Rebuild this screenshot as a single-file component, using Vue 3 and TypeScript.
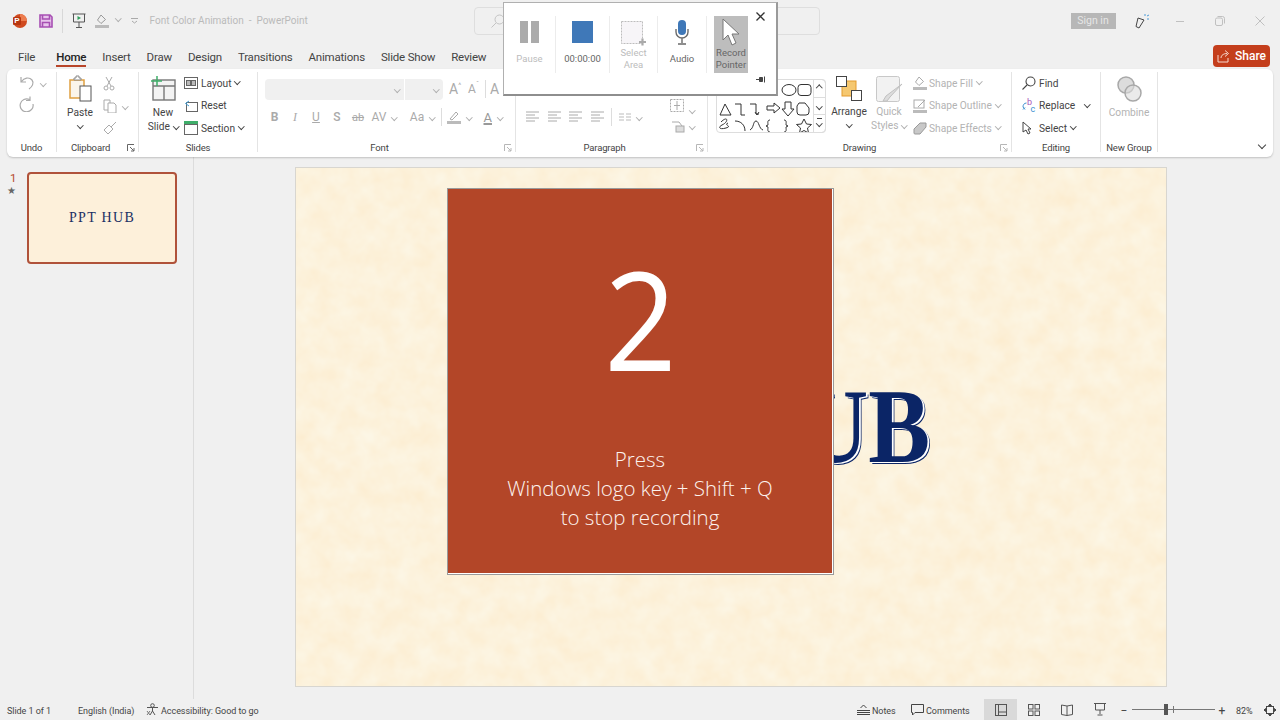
<script setup lang="ts">
interface Cell { t?: string; w: number; c?: string }
const fontRow: Cell[] = [
  { t: 'B', w: 21, c: 'fb' }, { t: 'I', w: 20, c: 'fi' }, { t: 'U', w: 22, c: 'fu' }, { t: 'S', w: 20, c: 'fs' },
  { t: 'ab', w: 22, c: 'fab' }, { t: 'AV', w: 20, c: 'fav' }, { w: 10, c: 'chevcell' }, { w: 8 }, { t: 'Aa', w: 20, c: 'faa' },
  { w: 10, c: 'chevcell' }
]
const tabs = ['File', 'Home', 'Insert', 'Draw', 'Design', 'Transitions', 'Animations', 'Slide Show', 'Review']
</script>

<template>
  <div class="app">
    <header class="titlebar">
      <svg class="ic logo" width="16" height="16" viewBox="0 0 16 16"><circle cx="8" cy="8" r="7" fill="#d04a1f"/><path d="M8 1a7 7 0 0 1 7 7H8z" fill="#ed7d4f"/><rect x="1" y="4" width="8" height="8" rx="1" fill="#b7360f"/><text x="5" y="10.4" text-anchor="middle" class="plogo">P</text></svg>
      <svg class="ic save" width="14" height="14" viewBox="0 0 14 14" fill="none" stroke="#a74fb3" stroke-width="1.6"><path d="M1 1h10l2 2v10H1z" fill="#e8c5ec"/><path d="M3.5 1v4h7V1M3.5 13V8.5h7V13"/></svg>
      <i class="qsep"></i>
      <svg class="ic pres" width="14" height="16" viewBox="0 0 14 16" fill="none" stroke="#555"><path d="M.5 1h13M1.5 1v8h11V1M7 9v5M4 14.500h6"/><path d="M5.500 3l3.500 2-3.500 2z" fill="#2e9e5b" stroke="none"/></svg>
      <svg class="ic fill" width="14" height="14" viewBox="0 0 14 14" fill="none" stroke="#999"><path d="M6 1l4.500 4.500L6 9.500 2.500 6z"/><rect x="0" y="11" width="14" height="3" fill="#bbb" stroke="none"/></svg>
      <span class="chev grey qchev"></span>
      <svg class="ic qat" width="7" height="6" viewBox="0 0 7 6" fill="none" stroke="#aaa"><path d="M0 .5h7M1 3l2.500 2L6 3"/></svg>
      <span class="doc">Font Color Animation&nbsp; -&nbsp; PowerPoint</span>
      <div class="search">
        <svg class="sicon" width="14" height="14" viewBox="0 0 14 14" fill="none" stroke="#c4c4c4"><circle cx="8.500" cy="5.500" r="4.500"/><path d="M5 9l-4.500 4.500"/></svg>
      </div>
      <span class="signin">Sign in</span>
      <svg class="ic pen" width="16" height="16" viewBox="0 0 16 16" fill="none" stroke="#444"><path d="M4 5l6 2-5 8-3-1.500z"/><path d="M11 1v2M13 3l2-1M13 6h2" stroke="#4f9cd6"/></svg>
      <span class="winbtns">
        <svg width="10" height="10" viewBox="0 0 10 10" stroke="#c0c0c0" fill="none"><path d="M1 5.500h8"/></svg>
        <svg width="10" height="10" viewBox="0 0 10 10" stroke="#c0c0c0" fill="none"><rect x=".5" y="2" width="7" height="7.500" rx="1.500"/><path d="M2.500 .5h5a2 2 0 0 1 2 2v5"/></svg>
        <svg width="10" height="10" viewBox="0 0 10 10" stroke="#c0c0c0" fill="none"><path d="M.5 .5l9 9M9.500 .5l-9 9"/></svg>
      </span>
    </header>

    <nav class="tabs">
      <span v-for="t in tabs" :key="t" class="tab" :class="{ active: t === 'Home', file: t === 'File' }">{{ t }}</span>
      <button class="share">
        <svg width="14" height="13" viewBox="0 0 14 13" fill="none" stroke="#f7d9cf"><path d="M1 5v7h10V8M4 8c0-3 3-4.500 6-4.500M8 .5l3.500 3L8 6.500"/></svg>
        Share
      </button>
    </nav>

    <section class="ribbon">
      <div class="grp g-undo">
        <div class="body col">
          <div class="row"><svg class="ml12" width="16" height="16" viewBox="0 0 16 16" fill="none" stroke="#aaa" stroke-width="1.200"><path d="M2 2v5h5M2.500 6.500C5 3 10 1.500 13 5c2.500 3 0 7-3 9"/></svg><span class="chev grey ml5"></span></div>
          <div class="row up2"><svg class="ml11" width="17" height="17" viewBox="0 0 17 17" fill="none" stroke="#aaa" stroke-width="1.200"><path d="M12 1.500v4H8M11.500 4.500A6.500 6.500 0 1 0 15 9"/></svg></div>
        </div>
        <div class="lab">Undo</div>
      </div>

      <div class="grp g-clip">
        <div class="body flexrow">
          <div class="big paste">
            <svg width="24" height="28" viewBox="0 0 24 28" fill="none"><path d="M2 5h14v18H2z" fill="#fbf5ea" stroke="#e0a040" stroke-width="1.500"/><path d="M6 5V3h2V1h3v2h2v2z" fill="#fff" stroke="#888"/><rect x="12" y="11" width="11" height="15" fill="#fff" stroke="#555"/></svg>
            <span class="bl">Paste</span>
            <span class="chev dark"></span>
          </div>
          <div class="stack clipicons">
            <div class="row"><svg width="12" height="15" viewBox="0 0 12 15" fill="none" stroke="#aaa"><path d="M3 1l5 9M9 1L4 10"/><circle cx="3" cy="12" r="2"/><circle cx="9" cy="12" r="2"/></svg></div>
            <div class="row"><svg width="14" height="14" viewBox="0 0 14 14" fill="none" stroke="#aaa"><path d="M1 1h6v10H1z"/><path d="M5 4h6l2 2v8H5z" fill="#fff"/></svg><span class="chev grey ml5"></span></div>
            <div class="row"><svg width="14" height="14" viewBox="0 0 14 14" fill="none" stroke="#aaa"><path d="M1 9l5-5 4 4-5 5zM8 6l5-5"/></svg></div>
          </div>
        </div>
        <div class="lab shifted">Clipboard</div>
        <svg class="launch" width="8" height="8" viewBox="0 0 8 8" fill="none" stroke="#666"><path d="M.5 7V.5H7M3 3l4 4M7 4v3H4"/></svg>
      </div>

      <div class="grp g-slides">
        <div class="body flexrow">
          <div class="big newslide">
            <svg width="26" height="25" viewBox="0 0 26 25" fill="none"><rect x="3" y="4" width="22" height="20" fill="#f3f3f3" stroke="#777" stroke-width="1.400"/><path d="M3 10h22M14 10v14" stroke="#777" stroke-width="1.400"/><path d="M7 0v10M1 5h11" stroke="#3fae6a" stroke-width="1.500"/></svg>
            <span class="bl">New</span>
            <span class="bl">Slide<span class="chev dark ml3 up"></span></span>
          </div>
          <div class="stack">
            <div class="row"><svg width="14" height="12" viewBox="0 0 14 12" fill="none" stroke="#666"><rect x=".5" y=".5" width="13" height="11"/><rect x="2.500" y="3.500" width="4" height="5" fill="#bbb"/><rect x="7.500" y="3.500" width="4" height="5" fill="#bbb"/></svg><span class="tx">Layout</span><span class="chev dark ml3 up"></span></div>
            <div class="row"><svg width="14" height="12" viewBox="0 0 14 12" fill="none" stroke="#666"><rect x="2.500" y="2.500" width="11" height="9"/><path d="M5 1L1.500 3.500 5 6" stroke="#3c9cd6"/></svg><span class="tx">Reset</span></div>
            <div class="row"><svg width="14" height="14" viewBox="0 0 14 14" fill="none" stroke="#666"><rect x=".5" y="3.500" width="13" height="10"/><path d="M0 1.500h14" stroke="#3fae6a" stroke-width="3"/></svg><span class="tx">Section</span><span class="chev dark ml3 up"></span></div>
          </div>
        </div>
        <div class="lab">Slides</div>
      </div>

      <div class="grp g-font">
        <div class="body">
          <div class="row fr1">
            <span class="combo c1"><span class="chev grey"></span></span>
            <span class="combo c2"><span class="chev grey"></span></span>
            <span class="aa a1">A<sup>^</sup></span>
            <span class="aa a2">A<sup>ˇ</sup></span>
            <i class="vs"></i>
            <span class="aa a3">A</span>
          </div>
          <div class="row fr2">
            <span v-for="(c, i) in fontRow" :key="i" class="cell" :class="c.c" :style="{ width: c.w + 'px' }"><template v-if="c.t">{{ c.t }}</template><span v-else-if="c.c" class="chev grey"></span></span>
            <i class="vs2"></i>
            <svg class="hl" width="14" height="14" viewBox="0 0 14 14" fill="none" stroke="#aaa"><path d="M3 9l6-7 2 2-6 6z"/><rect y="11" width="14" height="3" fill="#bbb" stroke="none"/></svg>
            <span class="chev grey ml5"></span>
            <span class="ac">A</span>
            <span class="chev grey ml5"></span>
          </div>
        </div>
        <div class="lab shifted">Font</div>
        <svg class="launch faded" width="8" height="8" viewBox="0 0 8 8" fill="none" stroke="#999"><path d="M.5 7V.5H7M3 3l4 4M7 4v3H4"/></svg>
      </div>

      <div class="grp g-para">
        <div class="body">
          <div class="row pr1">
            <svg width="14" height="13" viewBox="0 0 14 13" fill="none" stroke="#aaa" stroke-dasharray="2 1"><path d="M.5 .5h13v12H.5z"/><path d="M7 2v9M4 6.500h6" stroke-dasharray="none"/></svg><span class="chev grey ml5"></span>
          </div>
          <div class="row pr2">
            <svg v-for="n in 4" :key="n" class="al" width="13" height="12" viewBox="0 0 13 12" stroke="#aaa"><path d="M0 1h13M0 4h9M0 7h13M0 10h9"/></svg>
            <i class="vs3"></i>
            <svg width="12" height="8" viewBox="0 0 12 8" stroke="#bbb"><path d="M0 1h5M7 1h5M0 4h5M7 4h5M0 7h5M7 7h5"/></svg><span class="chev grey ml5"></span>
            <svg class="smart" width="14" height="12" viewBox="0 0 14 12" fill="none" stroke="#aaa"><path d="M1 1h7l3 4"/><rect x="5" y="5" width="8" height="6" fill="#ddd"/></svg><span class="chev grey smartchev"></span>
          </div>
        </div>
        <div class="lab shifted">Paragraph</div>
        <svg class="launch faded" width="8" height="8" viewBox="0 0 8 8" fill="none" stroke="#999"><path d="M.5 7V.5H7M3 3l4 4M7 4v3H4"/></svg>
      </div>

      <div class="grp g-draw">
        <div class="body flexrow">
          <div class="gallery">
            <svg width="96" height="52" viewBox="0 0 96 52" fill="none" stroke="#333"><ellipse cx="72" cy="10" rx="7" ry="5.500"/><rect x="81" y="4.500" width="13" height="11" rx="3"/><path d="M3 35l5-11 6 11zM18 24h6v11h4M33 24h6v10h3M38 32l2 3 2-3M50 26h7v-3l6 5-6 5v-3h-7zM68 22h6v7h3l-6 7-6-7h3zM82 23h6l4 5v4a3 3 0 0 1-3 3h-6a3 3 0 0 1-3-3v-6z"/><path d="M4 42c7-7 8 0 1 3-4 2-3 5 4 3s-3-3 2-5M18 41c6 0 10 4 10 10M33 50c4-2 3-9 6-9s3 8 7 9M53 40c-3 0-2 3-2 5l-2 1 2 1c0 2-1 5 2 5M67 40c3 0 2 3 2 5l2 1-2 1c0 2 1 5-2 5M87 39l2.500 5 5 .5-4 3.500 1 5-4.500-2.500-4.500 2.500 1-5-4-3.500 5-.5z"/></svg>
            <div class="gscroll">
              <span><i class="chev dark flip"></i></span>
              <span><i class="chev dark"></i></span>
              <span class="more"><i class="chev dark"></i></span>
            </div>
          </div>
          <div class="big arrange">
            <svg width="26" height="25" viewBox="0 0 26 25"><rect x="6" y="5" width="14" height="15" fill="#f5c871" stroke="#e49b2e"/><rect x=".5" y=".5" width="10" height="10" fill="#fff" stroke="#444"/><rect x="15.500" y="14.500" width="10" height="10" fill="#fff" stroke="#444"/></svg>
            <span class="bl">Arrange</span>
            <span class="chev dark"></span>
          </div>
          <div class="big quick">
            <svg width="27" height="27" viewBox="0 0 27 27" fill="none"><rect x=".5" y=".5" width="23" height="25" rx="2" fill="#f2f2f2" stroke="#c8c8c8"/><path d="M26 8L14 21l-3 4-4 0 3-5z" fill="#ddd" stroke="#c0c0c0"/></svg>
            <span class="bl gy">Quick</span>
            <span class="bl gy">Styles<span class="chev grey ml3 up"></span></span>
          </div>
          <div class="stack shapes">
            <div class="row"><svg width="14" height="14" viewBox="0 0 14 14" fill="none" stroke="#aaa"><path d="M6 1l4.500 4.500L6 9.500 2.500 6z"/><rect y="11" width="14" height="3" fill="#bbb" stroke="none"/></svg><span class="tx gy">Shape Fill</span><span class="chev grey ml3 up"></span></div>
            <div class="row"><svg width="14" height="14" viewBox="0 0 14 14" fill="none" stroke="#aaa"><rect x="1" y="1" width="10" height="8"/><path d="M5 8l7-7"/><rect y="11" width="14" height="3" fill="#bbb" stroke="none"/></svg><span class="tx gy">Shape Outline</span><span class="chev grey ml3 up"></span></div>
            <div class="row"><svg width="14" height="13" viewBox="0 0 14 13" fill="#c8c8c8" stroke="#999"><path d="M1 7l6-6h6v4l-6 7H2a1 1 0 0 1-1-1z"/></svg><span class="tx gy">Shape Effects</span><span class="chev grey ml3 up"></span></div>
          </div>
        </div>
        <div class="lab">Drawing</div>
        <svg class="launch faded" width="8" height="8" viewBox="0 0 8 8" fill="none" stroke="#999"><path d="M.5 7V.5H7M3 3l4 4M7 4v3H4"/></svg>
      </div>

      <div class="grp g-edit">
        <div class="body stack">
          <div class="row"><svg width="14" height="14" viewBox="0 0 14 14" fill="none" stroke="#444" stroke-width="1.100"><circle cx="8.500" cy="5.500" r="4.500"/><path d="M5 9l-4.500 4.500"/></svg><span class="tx">Find</span></div>
          <div class="row"><svg width="14" height="15" viewBox="0 0 14 15" fill="none"><text x="5" y="7" class="rb">b</text><text x="8.500" y="14" class="rc">c</text><path d="M4.500 5C2 5 1 7 1 9l2 2.500M1 11.500l2-2" stroke="#3c8fd0"/></svg><span class="tx">Replace</span><span class="chev dark repl"></span></div>
          <div class="row"><svg width="12" height="14" viewBox="0 0 12 14" fill="#fff" stroke="#444"><path d="M1 1v10l3-2 2 4 2-1-2-4h3z"/></svg><span class="tx sel">Select</span><span class="chev dark ml3 up"></span></div>
        </div>
        <div class="lab">Editing</div>
      </div>

      <div class="grp g-new">
        <div class="body">
          <div class="big combine">
            <svg width="25" height="26" viewBox="0 0 25 26" fill="#dcdcdc" stroke="#a8a8a8" stroke-width="1.500"><circle cx="9" cy="9" r="8"/><circle cx="16" cy="17" r="8" fill-opacity=".6"/></svg>
            <span class="bl gy">Combine</span>
          </div>
        </div>
        <div class="lab">New Group</div>
      </div>
      <span class="chev collapse"></span>
    </section>

    <main class="main">
      <aside class="thumbs">
        <div class="num"><span>1</span><b>★</b></div>
        <div class="thumb"><span class="serif">PPT HUB</span></div>
      </aside>
      <div class="canvas">
        <div class="slide">
          <svg class="paper" width="100%" height="100%">
            <filter id="parch" color-interpolation-filters="sRGB" x="0" y="0" width="100%" height="100%">
              <feTurbulence type="fractalNoise" baseFrequency="0.05" numOctaves="3" seed="7"/>
              <feColorMatrix type="matrix" values="0 0 0 0 0.99  0.045 0 0 0 0.925  0.1 0 0 0 0.81  0 0 0 0 1"/>
            </filter>
            <rect width="100%" height="100%" filter="url(#parch)"/>
          </svg>
          <span class="bigtitle">PPT HUB</span>
          <div class="count">
            <div class="digit">2</div>
            <p>Press<br>Windows logo key + Shift + Q<br>to stop recording</p>
          </div>
        </div>
      </div>
    </main>

    <footer class="status">
      <span class="s1">Slide 1 of 1</span>
      <span class="s2">English (India)</span>
      <svg class="s3" width="13" height="13" viewBox="0 0 13 13" fill="none" stroke="#555"><circle cx="6.500" cy="2.500" r="1.800"/><path d="M1 4.500h11M6.500 5v3M4 12l2.500-4L9 12"/><path d="M1 8l3 4M4 8l-3 4" stroke="#777"/></svg>
      <span class="s4">Accessibility: Good to go</span>
      <span class="spacer"></span>
      <svg width="13" height="11" viewBox="0 0 13 11" fill="none" stroke="#444"><path d="M0 6.500h13M0 8.500h13M0 10.500h13M3.500 4l3-3 3 3"/></svg>
      <span class="s5">Notes</span>
      <svg class="cm" width="13" height="13" viewBox="0 0 13 13" fill="none" stroke="#444"><path d="M.5 1.500h12v8H4l-2.500 2.500v-2.500h-1z"/></svg>
      <span class="s6">Comments</span>
      <span class="view on"><svg width="12" height="12" viewBox="0 0 12 12" fill="none" stroke="#555"><rect x=".5" y=".5" width="11" height="11"/><path d="M3.500 1v10M3.500 8h8"/></svg></span>
      <span class="view"><svg width="12" height="12" viewBox="0 0 12 12" fill="none" stroke="#555"><rect x=".5" y=".5" width="4.500" height="4.500"/><rect x="7" y=".5" width="4.500" height="4.500"/><rect x=".5" y="7" width="4.500" height="4.500"/><rect x="7" y="7" width="4.500" height="4.500"/></svg></span>
      <span class="view"><svg width="12" height="12" viewBox="0 0 12 12" fill="none" stroke="#555"><path d="M6 2L.5 1v9.500L6 11.500l5.500-1V1zM6 2v9.500"/></svg></span>
      <span class="view"><svg width="12" height="13" viewBox="0 0 12 13" fill="none" stroke="#555"><path d="M0 .5h12M1.500 1v6h9V1M6 7v4M3.500 12h5"/></svg></span>
      <span class="minus">−</span>
      <span class="slider"><i class="tick"></i><i class="thumbk"></i></span>
      <span class="plus">+</span>
      <span class="pct">82%</span>
      <svg class="fit" width="12" height="12" viewBox="0 0 12 12" fill="none" stroke="#444"><rect x="2.500" y="2.500" width="7" height="7"/><path d="M6 0l-1.500 1.500h3zM6 12l-1.500-1.500h3zM0 6l1.500-1.500v3zM12 6l-1.500-1.500v3z" fill="#444"/></svg>
    </footer>

    <div class="rec">
      <div class="ritem r-pause">
        <div class="rico bars"><i></i><i></i></div>
        <span class="rl light one">Pause</span>
      </div>
      <div class="ritem r-stop">
        <div class="rico"><i class="stop"></i></div>
        <span class="rl one">00:00:00</span>
      </div>
      <div class="ritem r-area">
        <svg class="rsvg" width="25" height="25" viewBox="0 0 25 25" fill="#f7f5f8"><rect x=".5" y=".5" width="21" height="22" stroke="#bdbdbd" stroke-dasharray="2 1"/><path d="M18 21h7M21.500 17.500v7" stroke="#aaa" stroke-width="2.200"/></svg>
        <span class="rl light">Select<br>Area</span>
      </div>
      <div class="ritem r-audio">
        <svg class="rsvg" width="14" height="25" viewBox="0 0 14 25" fill="none"><rect x="3" y="0" width="8" height="15" rx="4" fill="#3f78b8"/><path d="M1 9v3a6 6 0 0 0 12 0V9M7 18v5M3 24h8" stroke="#6a6a6a" stroke-width="1.400"/></svg>
        <span class="rl one">Audio</span>
      </div>
      <div class="ritem r-point">
        <svg class="rsvg cur" width="18" height="30" viewBox="0 0 18 30" fill="#fff" stroke="#777"><path d="M1 1v21l5-5 4 10 4-2-4-9h7z"/></svg>
        <span class="rl pt">Record<br>Pointer</span>
      </div>
      <svg class="rx" width="9" height="9" viewBox="0 0 9 9" stroke="#333" stroke-width="1.300"><path d="M.5 .5l8 8M8.500 .5l-8 8"/></svg>
      <svg class="rpin" width="9" height="7" viewBox="0 0 9 7" fill="#444" stroke="#444"><path d="M0 3.500h3M3.500 1.500h3v4h-3zM8.500 .5v6" /></svg>
    </div>
  </div>
</template>

<style>
html, body { margin: 0; background: #f0f0f0; }
</style>

<style scoped>
.app {
  position: relative; width: 1280px; height: 720px; overflow: hidden;
  display: flex; flex-direction: column; background: #f0f0f0;
  font-family: Roboto, "Liberation Sans", sans-serif; font-size: 11px; color: #444;
}
svg { display: block; flex: none; }
.chev { display: inline-block; width: 3.500px; height: 3.500px; border-right: 1px solid #555; border-bottom: 1px solid #555; transform: rotate(45deg); flex: none; }
.chev.grey { border-color: #b0b0b0; }
.chev.dark { border-color: #444; }
.chev.flip { transform: rotate(225deg); }
.chev.up { position: relative; top: -2px; }
.ml3 { margin-left: 4px; } .ml5 { margin-left: 6px; } .ml11 { margin-left: 11px; } .ml12 { margin-left: 12px; }
.up2 { position: relative; top: -2px; }

.titlebar { height: 41px; flex: none; display: flex; align-items: center; position: relative; }
.logo { margin-left: 12px; }
.save { margin-left: 11px; }
.qsep { width: 1px; height: 24px; background: #d8d8d8; margin-left: 9px; }
.pres { margin-left: 9px; }
.fill { margin-left: 9px; }
.qchev { margin-left: 7px; position: relative; top: -2px; }
.qat { margin-left: 10px; }
.doc { margin-left: 12px; width: 324px; font-size: 10px; color: #bababa; white-space: nowrap; }
.plogo { font: 700 8px "Liberation Sans", sans-serif; fill: #fff; }
.rb { font: 9px Roboto, sans-serif; fill: #a857b8; }
.rc { font: 9px Roboto, sans-serif; fill: #3c8fd0; }
.search { width: 346px; height: 28px; box-sizing: border-box; border: 1px solid #dedede; border-radius: 4px; padding: 6px 0 0 16px; }
.signin { margin-left: 251px; width: 45px; height: 16px; line-height: 16px; text-align: center; background: #b7b7b7; color: #e6e6e6; font-size: 10.500px; }
.pen { margin-left: 18px; }
.winbtns { margin-left: 25px; display: flex; gap: 30px; }

.tabs { height: 28px; flex: none; display: flex; align-items: flex-start; padding-left: 18px; position: relative; }
.tab { margin-right: 16px; font-size: 11.500px; letter-spacing: -.2px; line-height: 32px; height: 28px; position: relative; white-space: nowrap; }
.tab.file { margin-right: 21px; }
.tab.active { color: #222; font-weight: 500; }
.tab.active::after { content: ""; position: absolute; left: 0; right: 0; bottom: 2px; height: 2px; background: #b8452a; }
.share { position: absolute; left: 1213px; top: 4px; width: 57px; height: 22px; padding: 0; border: 0; border-radius: 4px; background: #c43e1c; color: #fff; font: 500 12px Roboto, sans-serif; display: flex; align-items: center; justify-content: center; gap: 4px; }

.ribbon { position: relative; margin: 0 7px; height: 88px; flex: none; box-sizing: border-box; padding-top: 3px; background: #fff; border-radius: 6px; box-shadow: 0 1px 2px rgba(0,0,0,.2); display: flex; align-items: flex-start; }
.grp { position: relative; height: 80px; box-sizing: border-box; border-right: 1px solid #e4e4e4; flex: none; }
.lab { position: absolute; left: 0; right: 0; top: 68px; text-align: center; font-size: 9.500px; letter-spacing: -.15px; line-height: 16px; color: #444; white-space: nowrap; }
.lab.shifted { right: 14px; }
.launch { position: absolute; right: 3px; top: 72px; }
.launch.faded { opacity: .7; }
.g-undo { width: 50px; } .g-clip { width: 82px; } .g-slides { width: 119px; } .g-font { width: 258px; }
.g-para { width: 192px; } .g-draw { width: 304px; } .g-edit { width: 89px; } .g-new { width: 57px; }
.body { height: 68px; }
.flexrow { display: flex; }
.row { height: 22.500px; display: flex; align-items: center; white-space: nowrap; }
.stack { display: flex; flex-direction: column; }
.tx { margin-left: 3px; font-size: 10.200px; }
.gy { color: #b3b3b3; }
.big { display: flex; flex-direction: column; align-items: center; }
.bl { font-size: 10.200px; line-height: 14px; white-space: nowrap; }

.paste { width: 34px; margin-left: 6px; padding-top: 3px; }
.paste .bl { margin-top: 3px; }
.paste .chev { margin-top: 3px; }
.clipicons { margin-left: 6px; }
.newslide { width: 34px; margin-left: 7px; padding-top: 4px; }
.newslide svg { margin-bottom: 5px; }
.newslide + .stack { margin-left: 4px; }

.fr1 { padding-left: 7px; height: 34px; align-items: center; }
.combo { height: 21px; background: #f0f0f0; display: flex; align-items: center; justify-content: flex-end; padding-right: 5px; box-sizing: border-box; flex: none; }
.c1 { width: 139px; border-radius: 4px 0 0 4px; }
.c2 { width: 38px; margin-left: 1px; border-radius: 0 4px 4px 0; }
.aa { color: #aaa; }
.aa sup { font-size: 7px; vertical-align: 6px; line-height: 0; }
.a1 { margin-left: 6px; font-size: 14px; }
.a2 { margin-left: 7px; font-size: 12px; }
.a3 { margin-left: 4px; font-size: 14px; }
.vs { width: 1px; height: 18px; background: #ddd; margin-left: 6px; }
.fr2 { padding-left: 6px; height: 22px; }
.cell { display: flex; justify-content: center; align-items: center; color: #aaa; font-size: 12px; height: 20px; }
.fb { font-weight: 700; } .fi { font-style: italic; font-family: "Liberation Serif", serif; } .fu { text-decoration: underline; } .fs { font-weight: 500; }
.fab { text-decoration: line-through; font-size: 11px; }
.vs2 { width: 1px; height: 18px; background: #ddd; margin-left: 4px; }
.hl { margin-left: 5px; }
.ac { margin-left: 12px; color: #999; font-size: 13px; text-decoration: underline; text-decoration-thickness: 2px; }

.pr1 { padding-left: 154px; height: 40px; margin-bottom: -6px; align-items: flex-end; box-sizing: border-box; }
.pr2 { padding-left: 10px; height: 22px; position: relative; }
.al { margin-right: 8.500px; }
.vs3 { width: 1px; height: 18px; background: #ddd; margin: 0 7px 0 -1px; }
.smart { position: absolute; left: 155px; top: 15px; }
.smartchev { position: absolute; left: 174px; top: 18px; }

.gallery { position: relative; width: 110px; height: 54px; margin: 7px 0 0 8px; box-sizing: border-box; border: 1px solid #ddd; border-radius: 4px; display: flex; background: #fff; flex: none; }
.gscroll { position: absolute; right: -1px; top: -1px; bottom: -1px; width: 13px; border: 1px solid #ddd; border-radius: 0 4px 4px 0; display: flex; flex-direction: column; box-sizing: border-box; }
.gscroll span { flex: 1; display: flex; align-items: center; justify-content: center; border-bottom: 1px solid #ddd; }
.gscroll span:last-child { border-bottom: 0; }
.more { position: relative; }
.more::before { content: ""; position: absolute; left: 3px; right: 3px; top: 3px; border-top: 1px solid #444; }
.arrange { width: 46px; padding-top: 4px; flex: none; }
.arrange .bl { margin-top: 4px; }
.arrange .chev { margin-top: 3px; }
.quick { width: 34px; padding-top: 4px; flex: none; }
.quick .bl:nth-of-type(1) { margin-top: 2px; }
.shapes { margin-left: 7px; }
.shapes .tx { margin-left: 2px; }

.g-edit .row { padding-left: 10px; }
.repl { margin-left: 10px; position: relative; top: -2px; }
.sel { margin-left: 5px; }
.combine { padding-top: 4px; }
.combine .bl { margin-top: 4px; }
.collapse { position: absolute; right: 8px; top: 73px; width: 5px; height: 5px; border-color: #444; }

.main { flex: 1; display: flex; min-height: 0; }
.thumbs { width: 194px; flex: none; box-sizing: border-box; border-right: 1px solid #dcdcdc; display: flex; padding: 15px 0 0 8px; align-items: flex-start; }
.num { width: 19px; display: flex; flex-direction: column; font-size: 11.500px; color: #b5492c; line-height: 13px; }
.num span { margin-left: 2px; }
.num b { color: #666; font-size: 10px; font-weight: 400; line-height: 12px; margin-left: -1px; }
.thumb { width: 150px; height: 92px; box-sizing: border-box; border: 2px solid #b0523a; border-radius: 4px; background: #fdf0da; display: flex; align-items: center; justify-content: center; }
.serif { font-family: "Liberation Serif", serif; font-size: 14px; font-weight: 400; letter-spacing: 1.300px; color: #1b2f63; }
.canvas { flex: 1; padding: 10px 0 0 101px; }
.slide { position: relative; width: 872px; height: 520px; box-sizing: border-box; border: 1px solid #d8d6d0; display: flex; align-items: center; justify-content: center; overflow: hidden; background: #fdf2dc; }
.paper { position: absolute; inset: 0; }
.bigtitle { position: relative; font-family: "Liberation Serif", serif; font-weight: 700; font-size: 106px; line-height: 1; color: #0b2566; white-space: nowrap; transform: scaleX(.875); text-shadow: 2px 1px 0 #fff, 3px 2px 0 #0b2566; }
.count { position: absolute; left: 152px; top: 21px; width: 385px; height: 385px; box-sizing: border-box; background: #b34628; border-right: 1px solid #fff; border-bottom: 1px solid #fff; outline: 1px solid #9a9a9a; color: #fff; font-family: "Open Sans", sans-serif; display: flex; flex-direction: column; align-items: center; }
.digit { font-size: 138px; font-weight: 500; line-height: 130px; margin-top: 63px; transform: scaleX(.92); }
.count p { margin: 63px 0 0; font-size: 20.500px; font-weight: 300; line-height: 29px; text-align: center; color: #fdf3ef; }

.status { height: 21px; flex: none; display: flex; align-items: center; font-size: 9px; letter-spacing: -.05px; color: #444; position: relative; white-space: nowrap; }
.status > span:not(.view):not(.slider) { position: relative; top: 1px; }
.s1 { margin-left: 7px; width: 71px; }
.s2 { width: 68px; }
.s3 { margin-right: 2px; }
.spacer { flex: 1; }
.s5 { margin-left: 2px; width: 39px; }
.s6 { margin-left: 2px; width: 58px; }
.view { width: 33px; height: 21px; display: flex; align-items: center; justify-content: center; }
.view.on { background: #d9d9d9; }
.minus { margin-left: 1px; font-size: 12px; width: 14px; text-align: center; }
.slider { position: relative; width: 83px; height: 1px; background: #777; margin-left: 1px; }
.tick { position: absolute; left: 41px; top: -3px; width: 1px; height: 7px; background: #777; }
.thumbk { position: absolute; left: 32px; top: -5px; width: 4px; height: 11px; background: #555; }
.plus { font-size: 12px; width: 14px; text-align: center; }
.pct { margin-left: 7px; width: 22px; font-size: 9px; }
.fit { margin: 0 4px 0 6px; }

.rec { position: absolute; left: 503px; top: 2px; width: 275px; height: 94px; box-sizing: border-box; background: #fff; border: 1px solid #b0b0b0; border-bottom: 2px solid #8e8e8e; border-right: 2px solid #9a9a9a; display: flex; align-items: flex-start; padding-top: 13px; }
.ritem { height: 57px; box-sizing: border-box; border-right: 1px solid #ececec; display: flex; flex-direction: column; align-items: center; position: relative; font-size: 9.500px; color: #666; flex: none; }
.r-pause { width: 52px; } .r-stop { width: 54px; } .r-area { width: 48px; } .r-audio { width: 49px; }
.r-point { width: 34px; margin-left: 7px; border: 0; background: #bdbdbd; color: #666; }
.rico { height: 22px; margin-top: 5px; display: flex; gap: 2.500px; }
.bars i { width: 8px; height: 22px; background: #ababab; }
.stop { display: block; width: 21px; height: 22px; background: #3f78b8; }
.rsvg { margin-top: 5px; }
.r-audio .rsvg { margin-top: 4px; }
.cur { margin-top: 2px; }
.rl { position: absolute; left: 0; right: 0; text-align: center; top: 31px; line-height: 12px; }
.rl.one { top: 37px; }
.light { color: #bcbcbc; }
.rx { position: absolute; left: 252px; top: 9px; }
.rpin { position: absolute; left: 252px; top: 73px; }
</style>
